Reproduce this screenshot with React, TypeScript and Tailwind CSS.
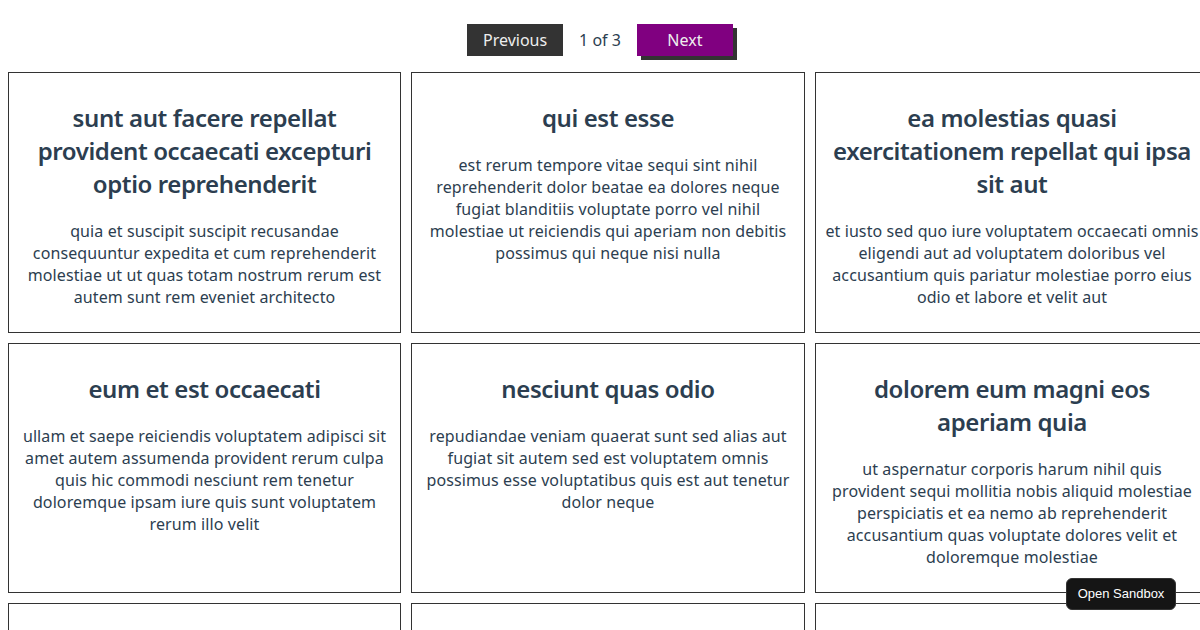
const posts = [
  {
    title: "sunt aut facere repellat provident occaecati excepturi optio reprehenderit",
    body: "quia et suscipit suscipit recusandae consequuntur expedita et cum reprehenderit molestiae ut ut quas totam nostrum rerum est autem sunt rem eveniet architecto",
  },
  {
    title: "qui est esse",
    body: "est rerum tempore vitae sequi sint nihil reprehenderit dolor beatae ea dolores neque fugiat blanditiis voluptate porro vel nihil molestiae ut reiciendis qui aperiam non debitis possimus qui neque nisi nulla",
  },
  {
    title: "ea molestias quasi exercitationem repellat qui ipsa sit aut",
    body: "et iusto sed quo iure voluptatem occaecati omnis eligendi aut ad voluptatem doloribus vel accusantium quis pariatur molestiae porro eius odio et labore et velit aut",
  },
  {
    title: "eum et est occaecati",
    body: "ullam et saepe reiciendis voluptatem adipisci sit amet autem assumenda provident rerum culpa quis hic commodi nesciunt rem tenetur doloremque ipsam iure quis sunt voluptatem rerum illo velit",
  },
  {
    title: "nesciunt quas odio",
    body: "repudiandae veniam quaerat sunt sed alias aut fugiat sit autem sed est voluptatem omnis possimus esse voluptatibus quis est aut tenetur dolor neque",
  },
  {
    title: "dolorem eum magni eos aperiam quia",
    body: "ut aspernatur corporis harum nihil quis provident sequi mollitia nobis aliquid molestiae perspiciatis et ea nemo ab reprehenderit accusantium quas voluptate dolores velit et doloremque molestiae",
  },
  {
    title: "magnam facilis autem",
    body: "dolore placeat quibusdam ea quo vitae magni quis enim qui quis quo nemo aut saepe quidem repellat excepturi ut quia sunt ut sequi eos ea sed quas",
  },
  {
    title: "dolorem dolore est ipsam",
    body: "dignissimos aperiam dolorem qui eum facilis quibusdam animi sint suscipit qui sint possimus cum quaerat magni maiores excepturi ipsam ut commodi dolor voluptatum modi aut vitae",
  },
  {
    title: "nesciunt iure omnis dolorem tempora et accusantium",
    body: "consectetur animi nesciunt iure dolore enim quia ad veniam autem ut quam aut nobis et est aut quod aut provident voluptas autem voluptas",
  },
];

export default function App() {
  return (
    <div className="h-[630px] w-[1200px] overflow-hidden bg-white text-[#2c3e50] font-['Noto_Sans',sans-serif]">
      <nav className="flex items-center justify-center pt-6">
        <button className="h-8 w-24 bg-[#333] text-base text-[#eee]">Previous</button>
        <span className="mx-4 text-base">1 of 3</span>
        <button className="h-8 w-24 bg-[#800080] text-base text-[#eee] shadow-[4px_4px_0_#333]">Next</button>
      </nav>

      <main className="mt-4 grid grid-cols-[393px_394px_394px] gap-[10px] pl-2">
        {posts.map((p) => (
          <article key={p.title} className="border border-[#333] px-2 pt-7 pb-6 text-center">
            <h2 className="mb-5 text-2xl font-semibold leading-[33px] tracking-[-0.4px]">{p.title}</h2>
            <p className="text-base leading-[22px] tracking-[0.1px]">{p.body}</p>
          </article>
        ))}
      </main>

      <button className="fixed right-6 bottom-5 h-8 w-[110px] rounded-md border border-[#333] bg-[#151515] text-[13px] text-white font-['Liberation_Sans',Arial,sans-serif]">
        Open Sandbox
      </button>
    </div>
  );
}
